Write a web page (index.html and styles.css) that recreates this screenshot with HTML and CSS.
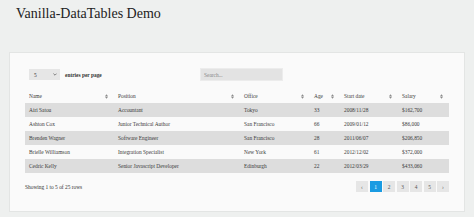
FILE: index.html
```html
<!DOCTYPE html>
<html lang="en">
<head>
  <meta charset="UTF-8" />
  <title>Vanilla-DataTables Demo</title>
  <link rel="stylesheet" href="styles.css">
</head>
<body>
  <h1>Vanilla-DataTables Demo</h1>
  <div class="dt-wrapper">
    <div class="dt-top">
      <div class="dt-dropdown">
        <div class="dt-selector">
          <span>5</span>
          <svg width="4" height="3" viewBox="0 0 4 3"><path d="M0.4 0.6 L2 2.2 L3.6 0.6" fill="none" stroke="#555" stroke-width="0.7"/></svg>
        </div>
        <label>entries per page</label>
      </div>
      <input class="dt-input" type="text" placeholder="Search...">
    </div>

    <table class="dt-table">
      <colgroup>
        <col style="width: 89px">
        <col style="width: 126px">
        <col style="width: 70px">
        <col style="width: 30px">
        <col style="width: 58px">
        <col style="width: 51px">
      </colgroup>
      <thead>
        <tr>
          <th><span class="dt-sorter">Name<svg width="3" height="5" viewBox="0 0 4 6"><path d="M0 2.6 L2 0 L4 2.6Z M0 3.4 L2 6 L4 3.4Z" fill="#8a8a8a"/></svg></span></th>
          <th><span class="dt-sorter">Position<svg width="3" height="5" viewBox="0 0 4 6"><path d="M0 2.6 L2 0 L4 2.6Z M0 3.4 L2 6 L4 3.4Z" fill="#8a8a8a"/></svg></span></th>
          <th><span class="dt-sorter">Office<svg width="3" height="5" viewBox="0 0 4 6"><path d="M0 2.6 L2 0 L4 2.6Z M0 3.4 L2 6 L4 3.4Z" fill="#8a8a8a"/></svg></span></th>
          <th><span class="dt-sorter">Age<svg width="3" height="5" viewBox="0 0 4 6"><path d="M0 2.6 L2 0 L4 2.6Z M0 3.4 L2 6 L4 3.4Z" fill="#8a8a8a"/></svg></span></th>
          <th><span class="dt-sorter">Start date<svg width="3" height="5" viewBox="0 0 4 6"><path d="M0 2.6 L2 0 L4 2.6Z M0 3.4 L2 6 L4 3.4Z" fill="#8a8a8a"/></svg></span></th>
          <th><span class="dt-sorter">Salary<svg width="3" height="5" viewBox="0 0 4 6"><path d="M0 2.6 L2 0 L4 2.6Z M0 3.4 L2 6 L4 3.4Z" fill="#8a8a8a"/></svg></span></th>
        </tr>
      </thead>
      <tbody>
        <tr><td>Airi Satou</td><td>Accountant</td><td>Tokyo</td><td>33</td><td>2008/11/28</td><td>$162,700</td></tr>
        <tr><td>Ashton Cox</td><td>Junior Technical Author</td><td>San Francisco</td><td>66</td><td>2009/01/12</td><td>$86,000</td></tr>
        <tr><td>Brenden Wagner</td><td>Software Engineer</td><td>San Francisco</td><td>28</td><td>2011/06/07</td><td>$206,850</td></tr>
        <tr><td>Brielle Williamson</td><td>Integration Specialist</td><td>New York</td><td>61</td><td>2012/12/02</td><td>$372,000</td></tr>
        <tr><td>Cedric Kelly</td><td>Senior Javascript Developer</td><td>Edinburgh</td><td>22</td><td>2012/03/29</td><td>$433,060</td></tr>
      </tbody>
    </table>

    <div class="dt-bottom">
      <div class="dt-info">Showing 1 to 5 of 25 rows</div>
      <ul class="dt-pagination">
        <li><a href="#">&lsaquo;</a></li>
        <li class="active"><a href="#">1</a></li>
        <li><a href="#">2</a></li>
        <li><a href="#">3</a></li>
        <li><a href="#">4</a></li>
        <li><a href="#">5</a></li>
        <li><a href="#">&rsaquo;</a></li>
      </ul>
    </div>
  </div>
</body>
</html>
```

FILE: styles.css
```css
body {
  margin: 0;
  background: #eef0ef;
  color: #333;
  font-family: 'Liberation Serif', 'Times New Roman', serif;
}

h1 {
  margin: 0;
  padding: 6px 16px 30px;
  font-size: 14px;
  line-height: 16px;
  font-weight: normal;
  color: #222;
}

.dt-wrapper {
  margin: 0 9px;
  padding: 15px 15px 19px;
  background: #fafafa;
  border: 1px solid #e3e5e4;
  font-size: 5.4px;
}

.dt-top {
  display: flex;
  align-items: center;
  height: 13px;
  margin-bottom: 8px;
}

.dt-dropdown {
  display: flex;
  align-items: center;
  width: 175px;
  padding-left: 4px;
  box-sizing: border-box;
}

.dt-selector {
  display: flex;
  align-items: center;
  justify-content: space-between;
  width: 31px;
  height: 11px;
  padding: 0 3px 0 5px;
  box-sizing: border-box;
  background: #e6e6e6;
  color: #333;
}

.dt-dropdown label {
  margin-left: 5px;
  font-weight: bold;
  color: #333;
}

.dt-input {
  width: 83px;
  height: 13px;
  margin: 0;
  padding: 0 3px;
  box-sizing: border-box;
  border: 1px solid #ececec;
  background: #e3e3e3;
  font-family: inherit;
  font-size: 5.4px;
  color: #444;
  outline: none;
}

.dt-input::placeholder {
  color: #888;
}

.dt-table {
  width: 100%;
  border-collapse: collapse;
  table-layout: fixed;
}

.dt-table th,
.dt-table td {
  height: 14px;
  padding: 0 4px;
  text-align: left;
  white-space: nowrap;
  color: #3a3a3a;
}

.dt-table th {
  font-weight: normal;
  padding-right: 6px;
}

.dt-sorter {
  display: flex;
  align-items: center;
  justify-content: space-between;
}

.dt-table tbody tr:nth-child(odd) {
  background: #dddddd;
}

.dt-bottom {
  display: flex;
  align-items: center;
  justify-content: space-between;
  margin-top: 8px;
}

.dt-info {
  color: #333;
}

.dt-pagination {
  display: flex;
  gap: 1.5px;
  margin: 0;
  padding: 0;
  list-style: none;
}

.dt-pagination a {
  display: flex;
  align-items: center;
  justify-content: center;
  width: 12px;
  height: 11px;
  background: #e6e6e6;
  color: #555;
  text-decoration: none;
}

.dt-pagination .active a {
  background: #1a9be2;
  color: #fff;
}
```
